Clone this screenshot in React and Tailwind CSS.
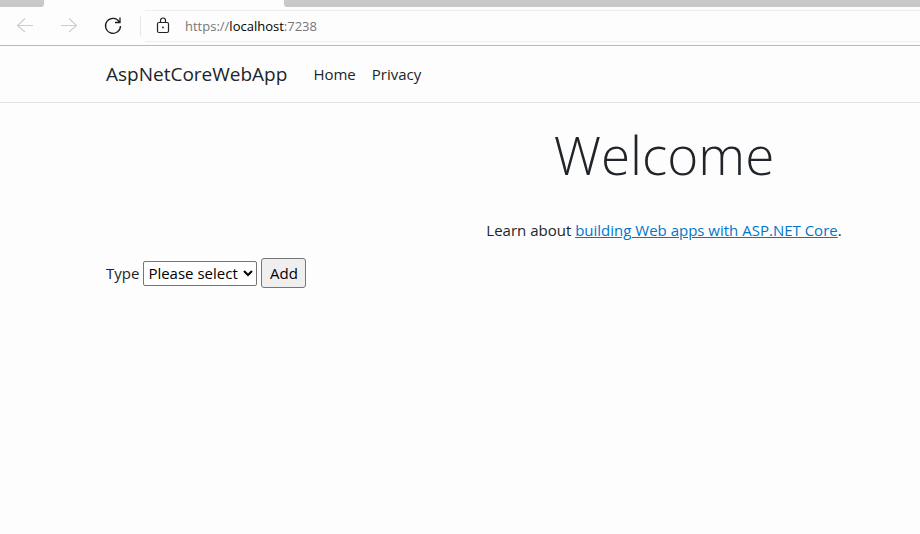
const uiFont = "font-['Segoe_UI','Open_Sans','Noto_Sans',sans-serif]";

function TabStrip() {
  return (
    <div className="flex h-[7px] bg-[#fdfdfd]">
      <div className="w-11 rounded-br-[3px] bg-[#c8c8c8]" />
      <div className="w-60" />
      <div className="flex-1 rounded-bl-[3px] bg-[#c8c8c8]" />
    </div>
  );
}

function Toolbar() {
  return (
    <div className="flex h-[39px] items-center border-b border-[#b9b9b9] pl-4">
      <button type="button" aria-label="Back" disabled className="mr-6 text-[#cdcdcd]">
        <svg width="20" height="20" viewBox="0 0 20 20" fill="none" stroke="currentColor" strokeWidth="1.1">
          <path d="M17 9.500H1.500M9 2.500l-7.500 7 7.500 6.500" />
        </svg>
      </button>
      <button type="button" aria-label="Forward" disabled className="mr-6 text-[#cdcdcd]">
        <svg width="20" height="20" viewBox="0 0 20 20" fill="none" stroke="currentColor" strokeWidth="1.1">
          <path d="M1 9.500h15.500M9 2.500l7.500 7-7.500 6.500" />
        </svg>
      </button>
      <button type="button" aria-label="Refresh" className="text-[#1c1c1c]">
        <svg width="20" height="20" viewBox="0 0 20 20" fill="none" stroke="currentColor" strokeWidth="1.3">
          <path d="M15.300 5.800A7.500 7.500 0 1 0 16.500 10M16 1.500v5h-5" />
        </svg>
      </button>
      <div className="ml-4 h-5 w-px bg-[#e6e6e6]" />
      <div className="ml-1 flex h-8 flex-1 items-center border-y border-[#ededed] pl-2">
        <svg width="20" height="20" viewBox="0 0 20 20" fill="none" stroke="#222" strokeWidth="1.2">
          <rect x="4.500" y="6.500" width="11" height="10" rx="1.500" />
          <path d="M7.500 6.500V4.500a2.500 2.500 0 0 1 5 0v2" />
          <circle cx="10" cy="11.500" r="0.900" fill="#222" stroke="none" />
        </svg>
        <div
          role="textbox"
          aria-label="Address"
          contentEditable
          suppressContentEditableWarning
          spellCheck={false}
          className="ml-3 text-[13px] leading-5 text-[#777] outline-none"
        >
          https://<span className="text-black">localhost</span>:7238
        </div>
      </div>
    </div>
  );
}

function SiteHeader() {
  return (
    <header className="border-b border-[#dee2e6]">
      <nav className="mx-auto flex h-14 max-w-[1140px] items-center px-3 text-[#212529]">
        <a href="#" className="mr-[26px] text-[19px] leading-[30px]">AspNetCoreWebApp</a>
        <a href="#" className="mr-4 text-[15px] leading-6">Home</a>
        <a href="#" className="text-[15px] leading-6">Privacy</a>
      </nav>
    </header>
  );
}

export default function App() {
  return (
    <div className={`min-h-screen overflow-hidden bg-[#fdfdfd] ${uiFont}`}>
      <TabStrip />
      <Toolbar />
      <div className="min-w-[1328px]">
        <SiteHeader />
        <main className="mx-auto max-w-[1140px] px-3 pt-5 text-[15px] leading-6 text-[#212529]">
          <div className="text-center">
            <h1 className="mb-8 text-[53px] leading-[63px] font-light">Welcome</h1>
            <p>
              Learn about <a href="#" className="text-[#0077cc] underline">building Web apps with ASP.NET Core</a>.
            </p>
          </div>
          <form className="mt-4 flex items-center gap-1">
            <label htmlFor="type">Type</label>
            <select id="type" className="h-[25px] w-[114px] appearance-auto rounded-[2px] border border-[#767676] bg-white text-black">
              <option>Please select</option>
            </select>
            <button type="button" className="h-[30px] w-[45px] rounded-[3px] border border-[#767676] bg-[#efefef] text-black">Add</button>
          </form>
        </main>
      </div>
    </div>
  );
}
